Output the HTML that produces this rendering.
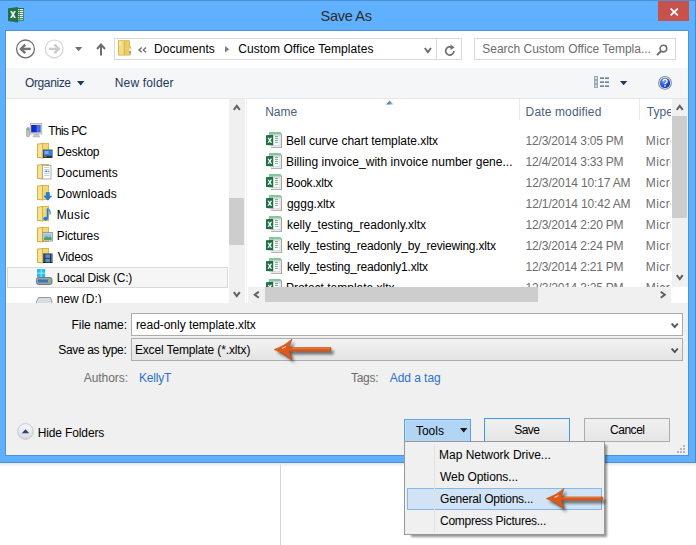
<!DOCTYPE html>
<html><head><meta charset="utf-8">
<style>
html,body{margin:0;padding:0;width:696px;height:545px;overflow:hidden;background:#fff;}
body{position:relative;font-family:"Liberation Sans",sans-serif;font-size:12px;color:#000;}
.a{position:absolute;}
.t{position:absolute;white-space:nowrap;}
.clip{position:absolute;overflow:hidden;}
</style></head><body>
<div class="a" style="left:280px;top:463px;width:1px;height:82px;background:#d4d4d4"></div>
<div class="a" style="left:0;top:463px;width:696px;height:4px;background:linear-gradient(#e6e6e6,rgba(255,255,255,0))"></div>

<!-- window frame -->
<div class="a" style="left:0;top:0;width:696px;height:463px;background:#5fb0fe"></div>
<div class="a" style="left:0;top:0;width:696px;height:1px;background:#4d8fd3"></div>
<div class="a" style="left:0;top:462px;width:696px;height:1px;background:#4d8fd3"></div>
<div class="a" style="left:695px;top:0;width:1px;height:463px;background:#4a8acb"></div>
<div class="a" style="left:5px;top:30px;width:684px;height:426px;background:#4f93d6"></div>
<div class="a" style="left:6px;top:31px;width:682px;height:424px;background:#f0f0f0"></div>

<!-- title bar -->
<svg class="a" style="left:8px;top:7px" width="16" height="16" viewBox="0 0 16 16">
  <rect x="9.8" y="1" width="6.2" height="12.6" fill="#1f7346"/>
  <rect x="10" y="2" width="5.2" height="10.6" fill="#fff"/>
  <rect x="10" y="3" width="5.2" height="0.8" fill="#1f7346"/>
  <rect x="10" y="5" width="5.2" height="0.8" fill="#1f7346"/>
  <rect x="10" y="7" width="5.2" height="0.8" fill="#1f7346"/>
  <rect x="10" y="9" width="5.2" height="0.8" fill="#1f7346"/>
  <rect x="10" y="11" width="5.2" height="0.8" fill="#1f7346"/>
  <rect x="11.3" y="2" width="0.6" height="10.6" fill="#1f7346"/>
  <path d="M0 1.2L10.2 0V15.5L0 14.1Z" fill="#1f7346"/>
  <path d="M2.1 4h1.9l1 2.1 1-2.1h1.9l-1.9 3.5 1.9 3.6H6l-1-2.2-1 2.2H2.1l1.9-3.6z" fill="#f4f4f4"/>
</svg>
<div class="t" style="left:320.55px;top:8.00px;font-size:14.5px;line-height:16px;letter-spacing:-0.292px;color:#2b2b2b;">Save As</div>
<div class="a" style="left:658px;top:1px;width:31px;height:20px;background:#c7514b"></div>
<svg class="a" style="left:669.7px;top:7.6px" width="9" height="8" viewBox="0 0 9 8"><path d="M0.6 0.5L7.8 7.4M7.8 0.5L0.6 7.4" stroke="#fff" stroke-width="1.75"/></svg>

<!-- nav bar -->
<div class="a" style="left:6px;top:31px;width:682px;height:37px;background:#fff"></div>
<svg class="a" style="left:15px;top:38px" width="21" height="21" viewBox="0 0 21 21">
  <circle cx="10.5" cy="10.9" r="8.9" fill="none" stroke="#6f6f6f" stroke-width="1.3"/>
  <path d="M6.5 10.9h9.3" stroke="#737373" stroke-width="2.4"/>
  <path d="M10.2 6.6L5.9 10.9 10.2 15.2" fill="none" stroke="#737373" stroke-width="2.4"/>
</svg>
<svg class="a" style="left:44px;top:38px" width="21" height="21" viewBox="0 0 21 21">
  <circle cx="10.2" cy="10.9" r="8.9" fill="none" stroke="#d4d4d4" stroke-width="1.2"/>
  <path d="M5 10.9h9.3" stroke="#cbcbcb" stroke-width="2.4"/>
  <path d="M10.5 6.6L14.8 10.9 10.5 15.2" fill="none" stroke="#cbcbcb" stroke-width="2.4"/>
</svg>
<svg class="a" style="left:75px;top:47px" width="8" height="5" viewBox="0 0 8 5"><path d="M0 0h7.2L3.6 4.3z" fill="#707070"/></svg>
<svg class="a" style="left:96px;top:42.5px" width="10" height="13" viewBox="0 0 10 13">
  <path d="M5 2V12.5" stroke="#6d6d6d" stroke-width="2"/>
  <path d="M1 6L5 1.6 9 6" fill="none" stroke="#6d6d6d" stroke-width="2"/>
</svg>
<div class="a" style="left:114px;top:38px;width:346px;height:20px;border:1px solid #d9d9d9;background:#fff"></div>
<div class="a" style="left:436px;top:39px;width:1px;height:20px;background:#d9d9d9"></div>
<svg class="a" style="left:118px;top:40px" width="14" height="16" viewBox="0 0 14 16">
  <rect x="0" y="0.3" width="12" height="15.2" rx="0.8" fill="#d6ad3c"/>
  <rect x="0.8" y="1" width="5" height="13.8" fill="#f4dc80"/>
  <rect x="1.5" y="1.5" width="1" height="4" fill="#fff8d8"/>
  <rect x="6.6" y="1" width="4.8" height="13.8" fill="#eacd6a"/>
  <rect x="11" y="6" width="2.2" height="9.2" fill="#e6c462"/>
  <rect x="11.5" y="8.5" width="1.2" height="3" fill="#fafafa"/>
  <rect x="11.5" y="11.3" width="1.2" height="2" fill="#3d8ee0"/>
</svg>
<svg class="a" style="left:137.5px;top:46.5px" width="9" height="6" viewBox="0 0 9 6"><path d="M3.7 0.5L1 2.9 3.7 5.3M8 0.5L5.3 2.9 8 5.3" fill="none" stroke="#6a6a6a" stroke-width="1.3"/></svg>
<svg class="a" style="left:225px;top:46px" width="5" height="7" viewBox="0 0 5 7"><path d="M0 0L4.3 3.3 0 6.6z" fill="#808080"/></svg>
<svg class="a" style="left:423.5px;top:46.5px" width="8" height="7" viewBox="0 0 8 7"><path d="M0.8 1L3.9 5 7 1" fill="none" stroke="#6d6d6d" stroke-width="2"/></svg>
<svg class="a" style="left:443.5px;top:42.5px" width="12" height="14" viewBox="0 0 12 14">
  <path d="M8.6 5A4.1 4.1 0 1 0 9.9 8" fill="none" stroke="#707070" stroke-width="1.7"/>
  <path d="M6.6 1.5L10.6 4.6 6.5 7z" fill="#707070"/>
</svg>
<div class="a" style="left:474px;top:38px;width:200px;height:20px;border:1px solid #d9d9d9;background:#fff"></div>
<svg class="a" style="left:655.5px;top:43.5px" width="12" height="12" viewBox="0 0 12 12">
  <circle cx="7.4" cy="4.6" r="3.3" fill="none" stroke="#6d6d6d" stroke-width="1.6"/>
  <path d="M5.1 7L1 11.1" stroke="#6d6d6d" stroke-width="2"/>
</svg>

<!-- toolbar -->
<div class="a" style="left:6px;top:68px;width:682px;height:30px;background:#f5f6f7"></div>
<div class="a" style="left:6px;top:98px;width:682px;height:1px;background:#e6e7e8"></div>
<svg class="a" style="left:77px;top:80.5px" width="8" height="5" viewBox="0 0 8 5"><path d="M0 0h7.4L3.7 4.4z" fill="#1e395b"/></svg>
<svg class="a" style="left:594px;top:76px" width="16" height="13" viewBox="0 0 16 13">
  <rect x="0.5" y="0.5" width="3" height="3" fill="#fff" stroke="#97a8bd" stroke-width="1"/>
  <rect x="0.5" y="4.5" width="3" height="3" fill="#fff" stroke="#97a8bd" stroke-width="1"/>
  <rect x="0.5" y="8.5" width="3" height="3" fill="#fff" stroke="#97a8bd" stroke-width="1"/>
  <rect x="1.5" y="1.5" width="1" height="1" fill="#3c9a4a"/>
  <rect x="1.5" y="5.5" width="1" height="1" fill="#e03b2b"/>
  <rect x="1.5" y="9.5" width="1" height="1" fill="#2f5fd0"/>
  <path d="M6 2.2h4M11 2.2h4M6 6.2h4M11 6.2h4M6 10.2h4M11 10.2h4" stroke="#4a5f7a" stroke-width="1.3"/>
</svg>
<svg class="a" style="left:620px;top:81px" width="8" height="5" viewBox="0 0 8 5"><path d="M0 0h7.3L3.65 4.2z" fill="#1e395b"/></svg>
<svg class="a" style="left:658px;top:76px" width="14" height="14" viewBox="0 0 14 14">
  <defs><radialGradient id="hg" cx="0.4" cy="0.3" r="0.75"><stop offset="0" stop-color="#7aa6f0"/><stop offset="0.55" stop-color="#2f5ed8"/><stop offset="1" stop-color="#0a1ea8"/></radialGradient></defs>
  <circle cx="7" cy="6.9" r="6.4" fill="#f4f6fa" stroke="#8f8f8f" stroke-width="1.1"/>
  <circle cx="7" cy="6.9" r="5.2" fill="url(#hg)"/>
  <path d="M5.2 5.2a1.9 1.9 0 1 1 2.5 1.8c-.5.3-.7.6-.7 1.3" fill="none" stroke="#fff" stroke-width="1.3"/>
  <rect x="6.3" y="9.3" width="1.4" height="1.4" fill="#fff"/>
</svg>

<!-- main area -->
<div class="a" style="left:6px;top:99px;width:682px;height:204px;background:#fff"></div>
<!-- nav scrollbar -->
<div class="a" style="left:229px;top:99px;width:16px;height:204px;background:#f0f0f0"></div>
<div class="a" style="left:229px;top:198px;width:15px;height:47px;background:#cdcdcd"></div>
<svg class="a" style="left:232.6px;top:104.4px" width="8" height="8" viewBox="0 0 8 8"><path d="M0.75 5.8L3.75 1.8 6.75 5.8" fill="none" stroke="#606060" stroke-width="2"/></svg>
<svg class="a" style="left:232.6px;top:291.3px" width="8" height="8" viewBox="0 0 8 8"><path d="M0.75 1.2L3.75 5.2 6.75 1.2" fill="none" stroke="#606060" stroke-width="2"/></svg>
<div class="a" style="left:246px;top:99px;width:1px;height:204px;background:#f3f3f3"></div>
<!-- nav pane -->
<div class="a" style="left:7px;top:267px;width:219px;height:19px;border:1px solid #dadada;background:#f6f6f6"></div>
<div class="clip" style="left:6px;top:99px;width:223px;height:204px">
<svg class="a" style="left:19.5px;top:23.5px" width="17" height="15" viewBox="0 0 17 15">
  <defs><linearGradient id="scr" x1="0" x2="1"><stop offset="0" stop-color="#0a20c8"/><stop offset="0.55" stop-color="#1a34d0"/><stop offset="0.62" stop-color="#4a78e0"/><stop offset="1" stop-color="#3a60d8"/></linearGradient></defs>
  <rect x="0.6" y="4.6" width="2.8" height="9.2" rx="1.2" fill="#c4c4c4" stroke="#8a8a8a" stroke-width="0.6"/>
  <rect x="1" y="5.6" width="2" height="1.6" fill="#40d040"/>
  <rect x="4.2" y="0.6" width="11.6" height="10.4" fill="#dcdcdc" stroke="#a8a8a8" stroke-width="0.7"/>
  <rect x="5.2" y="2" width="9.4" height="7.4" fill="url(#scr)"/>
  <path d="M8.5 11h4l0.6 1.6H7.9z" fill="#b0b0b0"/>
  <rect x="6.6" y="12.4" width="7.4" height="1.8" rx="0.6" fill="#bdbdbd"/>
</svg>
<div class="t" style="left:42.30px;top:25.00px;font-size:12px;line-height:14px;letter-spacing:-0.617px;">This PC</div>
<div class="t" style="left:50.80px;top:46.00px;font-size:12px;line-height:14px;letter-spacing:-0.217px;">Desktop</div>
<div class="t" style="left:50.80px;top:67.00px;font-size:12px;line-height:14px;letter-spacing:0.025px;">Documents</div>
<div class="t" style="left:50.80px;top:88.00px;font-size:12px;line-height:14px;letter-spacing:0.062px;">Downloads</div>
<div class="t" style="left:50.80px;top:109.00px;font-size:12px;line-height:14px;letter-spacing:0.325px;">Music</div>
<div class="t" style="left:50.80px;top:130.00px;font-size:12px;line-height:14px;letter-spacing:-0.143px;">Pictures</div>
<div class="t" style="left:51.80px;top:151.00px;font-size:12px;line-height:14px;letter-spacing:-0.240px;">Videos</div>
<div class="t" style="left:50.80px;top:172.00px;font-size:12px;line-height:14px;letter-spacing:-0.229px;">Local Disk (C:)</div>
<div class="t" style="left:50.80px;top:193.00px;font-size:12px;line-height:14px;letter-spacing:-0.071px;">new (D:)</div>
<svg class="a" style="left:31px;top:44px" width="16" height="16" viewBox="0 0 16 16"><rect x="5" y="0" width="7" height="15" fill="#d8b040"/><rect x="5.8" y="0.8" width="5.4" height="13.4" fill="#f0d878"/><path d="M0 0.8L6 0V15.4L0 14.8z" fill="#cfa63a"/><path d="M0.8 1.4L5.2 0.9V14.5L0.8 14.1z" fill="#f6e291"/><rect x="6" y="6.6" width="9.5" height="8.4" fill="#2f2f2f"/><rect x="6.6" y="7.2" width="8.3" height="5.6" fill="#3a7ee0"/><rect x="7.5" y="8" width="4" height="3" fill="#6fb0f0"/><rect x="6.8" y="13" width="1.2" height="1.4" fill="#e04020"/><rect x="8.2" y="13" width="1.2" height="1.4" fill="#40b040"/></svg>
<svg class="a" style="left:31px;top:65px" width="16" height="16" viewBox="0 0 16 16"><rect x="5" y="0" width="7" height="15" fill="#d8b040"/><rect x="5.8" y="0.8" width="5.4" height="13.4" fill="#f0d878"/><path d="M0 0.8L6 0V15.4L0 14.8z" fill="#cfa63a"/><path d="M0.8 1.4L5.2 0.9V14.5L0.8 14.1z" fill="#f6e291"/><rect x="5.6" y="1.3" width="8.4" height="13.7" fill="#fff" stroke="#9a9a9a" stroke-width="0.8"/><path d="M7 3.5h5.5M7 5.5h5.5M7 7.5h5.5M7 9.5h5.5M7 11.5h5.5" stroke="#b8c4d0" stroke-width="0.8"/><rect x="8.5" y="6.5" width="1.6" height="1.6" fill="#2080e8"/><rect x="11" y="6.8" width="1.2" height="1.2" fill="#30a0f0"/></svg>
<svg class="a" style="left:31px;top:86px" width="16" height="16" viewBox="0 0 16 16"><rect x="5" y="0" width="7" height="15" fill="#d8b040"/><rect x="5.8" y="0.8" width="5.4" height="13.4" fill="#f0d878"/><path d="M0 0.8L6 0V15.4L0 14.8z" fill="#cfa63a"/><path d="M0.8 1.4L5.2 0.9V14.5L0.8 14.1z" fill="#f6e291"/><path d="M9.2 7.5h3.2v3.5h2.3l-3.9 4.2-3.9-4.2h2.3z" fill="#1f7ee0" stroke="#0d5cb0" stroke-width="0.5"/></svg>
<svg class="a" style="left:31px;top:107px" width="16" height="16" viewBox="0 0 16 16"><rect x="5" y="0" width="7" height="15" fill="#d8b040"/><rect x="5.8" y="0.8" width="5.4" height="13.4" fill="#f0d878"/><path d="M0 0.8L6 0V15.4L0 14.8z" fill="#cfa63a"/><path d="M0.8 1.4L5.2 0.9V14.5L0.8 14.1z" fill="#f6e291"/><path d="M10.5 2.5v10" stroke="#1f7ee0" stroke-width="1.6"/><ellipse cx="8.6" cy="12.6" rx="2.4" ry="1.9" fill="#1f7ee0"/><path d="M10.5 2.5q3.5 2 2.5 6" fill="none" stroke="#3a9af0" stroke-width="1.4"/></svg>
<svg class="a" style="left:31px;top:128px" width="16" height="16" viewBox="0 0 16 16"><rect x="5" y="0" width="7" height="15" fill="#d8b040"/><rect x="5.8" y="0.8" width="5.4" height="13.4" fill="#f0d878"/><path d="M0 0.8L6 0V15.4L0 14.8z" fill="#cfa63a"/><path d="M0.8 1.4L5.2 0.9V14.5L0.8 14.1z" fill="#f6e291"/><rect x="6" y="5.5" width="9.5" height="8.5" fill="#e8e8e8" stroke="#8a8a8a" stroke-width="0.8"/><rect x="7" y="6.5" width="7.5" height="6.5" fill="#8ec8ee"/><path d="M7 11l2.5-2 2 1.5 1.5-1 1.5 1v2.5H7z" fill="#5aa060"/></svg>
<svg class="a" style="left:31px;top:149px" width="16" height="16" viewBox="0 0 16 16"><rect x="5" y="0" width="7" height="15" fill="#d8b040"/><rect x="5.8" y="0.8" width="5.4" height="13.4" fill="#f0d878"/><path d="M0 0.8L6 0V15.4L0 14.8z" fill="#cfa63a"/><path d="M0.8 1.4L5.2 0.9V14.5L0.8 14.1z" fill="#f6e291"/><rect x="6" y="5.5" width="9.5" height="9.5" fill="#222"/><rect x="8.3" y="6.3" width="4.9" height="3.6" fill="#4a8fd8"/><rect x="8.3" y="10.6" width="4.9" height="3.6" fill="#4a8fd8"/><path d="M6.9 6.5v8M14.6 6.5v8" stroke="#ddd" stroke-width="0.9" stroke-dasharray="1 1"/></svg>
<svg class="a" style="left:30px;top:170px" width="17" height="17" viewBox="0 0 17 17">
  <rect x="1" y="0" width="3.8" height="3.8" fill="#1ec0f0"/><rect x="5.4" y="0" width="3.8" height="3.8" fill="#1ec0f0"/>
  <rect x="1" y="4.4" width="3.8" height="3.8" fill="#1ec0f0"/><rect x="5.4" y="4.4" width="3.8" height="3.8" fill="#1ec0f0"/>
  <rect x="0.5" y="8.5" width="15.5" height="7" rx="2" fill="#9aa2aa" stroke="#5d646c" stroke-width="0.8"/>
  <rect x="2" y="10.5" width="11" height="3" fill="#3c72b8"/>
  <rect x="12" y="10.5" width="1.5" height="3" fill="#58d858"/>
</svg>
<svg class="a" style="left:30px;top:193.5px" width="17" height="17" viewBox="0 0 17 17">
  <path d="M2.5 4.5h12l1.5 4v7H0.5v-7z" fill="#d8dcdf" stroke="#7d848a" stroke-width="0.8"/>
  <rect x="2" y="10.5" width="11" height="3" fill="#fff" stroke="#8a9096" stroke-width="0.5"/>
  <rect x="12" y="10.5" width="1.5" height="3" fill="#58d858"/>
</svg>
</div>

<!-- file list -->
<svg class="a" style="left:385.5px;top:99.5px" width="8" height="5" viewBox="0 0 8 5"><defs><linearGradient id="sg" x1="0" x2="1"><stop offset="0" stop-color="#3a5a80"/><stop offset="1" stop-color="#9bd0f0"/></linearGradient></defs><path d="M0 4.5L3.75 0.5 7.5 4.5z" fill="url(#sg)"/></svg>
<div class="a" style="left:519px;top:99px;width:1px;height:21px;background:#e3ebf3"></div>
<div class="a" style="left:639px;top:99px;width:1px;height:21px;background:#e3ebf3"></div>
<div class="clip" style="left:246px;top:99px;width:425px;height:188px">
<div class="t" style="left:19.20px;top:6.00px;font-size:12px;line-height:14px;letter-spacing:-0.033px;color:#4c607a;">Name</div>
<div class="t" style="left:279.60px;top:6.00px;font-size:12px;line-height:14px;letter-spacing:0.142px;color:#4c607a;">Date modified</div>
<div class="t" style="left:400.80px;top:6.00px;font-size:12px;line-height:14px;color:#4c607a;">Type</div>
<div class="t" style="left:39.90px;top:35.00px;font-size:12px;line-height:14px;letter-spacing:-0.041px;">Bell curve chart template.xltx</div>
<div class="t" style="left:279.60px;top:35.00px;font-size:12px;line-height:14px;letter-spacing:-0.213px;color:#6d6d6d;">12/3/2014 3:05 PM</div>
<div class="t" style="left:399.80px;top:35.00px;font-size:12px;line-height:14px;letter-spacing:0.450px;color:#6d6d6d;">Microsoft</div>
<div class="t" style="left:39.90px;top:56.00px;font-size:12px;line-height:14px;letter-spacing:0.029px;">Billing invoice_with invoice number gene...</div>
<div class="t" style="left:279.60px;top:56.00px;font-size:12px;line-height:14px;letter-spacing:-0.213px;color:#6d6d6d;">12/4/2014 3:33 PM</div>
<div class="t" style="left:399.80px;top:56.00px;font-size:12px;line-height:14px;letter-spacing:0.450px;color:#6d6d6d;">Microsoft</div>
<div class="t" style="left:39.90px;top:77.00px;font-size:12px;line-height:14px;letter-spacing:-0.213px;">Book.xltx</div>
<div class="t" style="left:279.60px;top:77.00px;font-size:12px;line-height:14px;letter-spacing:-0.141px;color:#6d6d6d;">12/3/2014 10:17 AM</div>
<div class="t" style="left:399.80px;top:77.00px;font-size:12px;line-height:14px;letter-spacing:0.450px;color:#6d6d6d;">Microsoft</div>
<div class="t" style="left:40.90px;top:98.00px;font-size:12px;line-height:14px;">gggg.xltx</div>
<div class="t" style="left:279.60px;top:98.00px;font-size:12px;line-height:14px;letter-spacing:-0.141px;color:#6d6d6d;">12/1/2014 10:42 AM</div>
<div class="t" style="left:399.80px;top:98.00px;font-size:12px;line-height:14px;letter-spacing:0.450px;color:#6d6d6d;">Microsoft</div>
<div class="t" style="left:40.90px;top:119.00px;font-size:12px;line-height:14px;">kelly_testing_readonly.xltx</div>
<div class="t" style="left:279.60px;top:119.00px;font-size:12px;line-height:14px;letter-spacing:-0.213px;color:#6d6d6d;">12/3/2014 2:20 PM</div>
<div class="t" style="left:399.80px;top:119.00px;font-size:12px;line-height:14px;letter-spacing:0.450px;color:#6d6d6d;">Microsoft</div>
<div class="t" style="left:40.90px;top:140.00px;font-size:12px;line-height:14px;letter-spacing:-0.200px;">kelly_testing_readonly_by_reviewing.xltx</div>
<div class="t" style="left:279.60px;top:140.00px;font-size:12px;line-height:14px;letter-spacing:-0.213px;color:#6d6d6d;">12/3/2014 2:24 PM</div>
<div class="t" style="left:399.80px;top:140.00px;font-size:12px;line-height:14px;letter-spacing:0.450px;color:#6d6d6d;">Microsoft</div>
<div class="t" style="left:40.90px;top:161.00px;font-size:12px;line-height:14px;letter-spacing:-0.207px;">kelly_testing_readonly1.xltx</div>
<div class="t" style="left:279.60px;top:161.00px;font-size:12px;line-height:14px;letter-spacing:-0.213px;color:#6d6d6d;">12/3/2014 2:21 PM</div>
<div class="t" style="left:399.80px;top:161.00px;font-size:12px;line-height:14px;letter-spacing:0.450px;color:#6d6d6d;">Microsoft</div>
<div class="t" style="left:39.90px;top:182.00px;font-size:12px;line-height:14px;">Protect template.xltx</div>
<div class="t" style="left:279.60px;top:182.00px;font-size:12px;line-height:14px;letter-spacing:-0.213px;color:#6d6d6d;">12/3/2014 3:25 PM</div>
<div class="t" style="left:399.80px;top:182.00px;font-size:12px;line-height:14px;letter-spacing:0.450px;color:#6d6d6d;">Microsoft</div>
<svg class="a" style="left:20px;top:33px" width="16" height="16" viewBox="0 0 16 16"><path d="M3 0h11.3l1.7 1.7V3H3z" fill="#84c6a0"/><rect x="14.8" y="2.5" width="1.2" height="13.3" fill="#a3a3a3"/><rect x="5" y="14.6" width="11" height="1.2" fill="#a3a3a3"/><rect x="4" y="2.6" width="10.8" height="12" fill="#fff"/><rect x="7.6" y="3.2" width="6.4" height="10.6" fill="#fff" stroke="#c4c4c4" stroke-width="0.7"/><path d="M9 4.7h3.2" stroke="#7a7a7a" stroke-width="0.9"/><path d="M9 6.6h3.2M9 8.5h3.2M9 10.4h3.2" stroke="#62b283" stroke-width="0.9"/><path d="M0 3.3L7 2.8V13.5L0 12.9Z" fill="#1e7145"/><path d="M1.5 5.8h1.5l.8 1.5.8-1.5h1.5l-1.5 2.4 1.5 2.5H4.6l-.8-1.5-.8 1.5H1.5l1.5-2.5z" fill="#fff"/></svg>
<svg class="a" style="left:20px;top:54px" width="16" height="16" viewBox="0 0 16 16"><path d="M3 0h11.3l1.7 1.7V3H3z" fill="#84c6a0"/><rect x="14.8" y="2.5" width="1.2" height="13.3" fill="#a3a3a3"/><rect x="5" y="14.6" width="11" height="1.2" fill="#a3a3a3"/><rect x="4" y="2.6" width="10.8" height="12" fill="#fff"/><rect x="7.6" y="3.2" width="6.4" height="10.6" fill="#fff" stroke="#c4c4c4" stroke-width="0.7"/><path d="M9 4.7h3.2" stroke="#7a7a7a" stroke-width="0.9"/><path d="M9 6.6h3.2M9 8.5h3.2M9 10.4h3.2" stroke="#62b283" stroke-width="0.9"/><path d="M0 3.3L7 2.8V13.5L0 12.9Z" fill="#1e7145"/><path d="M1.5 5.8h1.5l.8 1.5.8-1.5h1.5l-1.5 2.4 1.5 2.5H4.6l-.8-1.5-.8 1.5H1.5l1.5-2.5z" fill="#fff"/></svg>
<svg class="a" style="left:20px;top:75px" width="16" height="16" viewBox="0 0 16 16"><path d="M3 0h11.3l1.7 1.7V3H3z" fill="#84c6a0"/><rect x="14.8" y="2.5" width="1.2" height="13.3" fill="#a3a3a3"/><rect x="5" y="14.6" width="11" height="1.2" fill="#a3a3a3"/><rect x="4" y="2.6" width="10.8" height="12" fill="#fff"/><rect x="7.6" y="3.2" width="6.4" height="10.6" fill="#fff" stroke="#c4c4c4" stroke-width="0.7"/><path d="M9 4.7h3.2" stroke="#7a7a7a" stroke-width="0.9"/><path d="M9 6.6h3.2M9 8.5h3.2M9 10.4h3.2" stroke="#62b283" stroke-width="0.9"/><path d="M0 3.3L7 2.8V13.5L0 12.9Z" fill="#1e7145"/><path d="M1.5 5.8h1.5l.8 1.5.8-1.5h1.5l-1.5 2.4 1.5 2.5H4.6l-.8-1.5-.8 1.5H1.5l1.5-2.5z" fill="#fff"/></svg>
<svg class="a" style="left:20px;top:96px" width="16" height="16" viewBox="0 0 16 16"><path d="M3 0h11.3l1.7 1.7V3H3z" fill="#84c6a0"/><rect x="14.8" y="2.5" width="1.2" height="13.3" fill="#a3a3a3"/><rect x="5" y="14.6" width="11" height="1.2" fill="#a3a3a3"/><rect x="4" y="2.6" width="10.8" height="12" fill="#fff"/><rect x="7.6" y="3.2" width="6.4" height="10.6" fill="#fff" stroke="#c4c4c4" stroke-width="0.7"/><path d="M9 4.7h3.2" stroke="#7a7a7a" stroke-width="0.9"/><path d="M9 6.6h3.2M9 8.5h3.2M9 10.4h3.2" stroke="#62b283" stroke-width="0.9"/><path d="M0 3.3L7 2.8V13.5L0 12.9Z" fill="#1e7145"/><path d="M1.5 5.8h1.5l.8 1.5.8-1.5h1.5l-1.5 2.4 1.5 2.5H4.6l-.8-1.5-.8 1.5H1.5l1.5-2.5z" fill="#fff"/></svg>
<svg class="a" style="left:20px;top:117px" width="16" height="16" viewBox="0 0 16 16"><path d="M3 0h11.3l1.7 1.7V3H3z" fill="#84c6a0"/><rect x="14.8" y="2.5" width="1.2" height="13.3" fill="#a3a3a3"/><rect x="5" y="14.6" width="11" height="1.2" fill="#a3a3a3"/><rect x="4" y="2.6" width="10.8" height="12" fill="#fff"/><rect x="7.6" y="3.2" width="6.4" height="10.6" fill="#fff" stroke="#c4c4c4" stroke-width="0.7"/><path d="M9 4.7h3.2" stroke="#7a7a7a" stroke-width="0.9"/><path d="M9 6.6h3.2M9 8.5h3.2M9 10.4h3.2" stroke="#62b283" stroke-width="0.9"/><path d="M0 3.3L7 2.8V13.5L0 12.9Z" fill="#1e7145"/><path d="M1.5 5.8h1.5l.8 1.5.8-1.5h1.5l-1.5 2.4 1.5 2.5H4.6l-.8-1.5-.8 1.5H1.5l1.5-2.5z" fill="#fff"/></svg>
<svg class="a" style="left:20px;top:138px" width="16" height="16" viewBox="0 0 16 16"><path d="M3 0h11.3l1.7 1.7V3H3z" fill="#84c6a0"/><rect x="14.8" y="2.5" width="1.2" height="13.3" fill="#a3a3a3"/><rect x="5" y="14.6" width="11" height="1.2" fill="#a3a3a3"/><rect x="4" y="2.6" width="10.8" height="12" fill="#fff"/><rect x="7.6" y="3.2" width="6.4" height="10.6" fill="#fff" stroke="#c4c4c4" stroke-width="0.7"/><path d="M9 4.7h3.2" stroke="#7a7a7a" stroke-width="0.9"/><path d="M9 6.6h3.2M9 8.5h3.2M9 10.4h3.2" stroke="#62b283" stroke-width="0.9"/><path d="M0 3.3L7 2.8V13.5L0 12.9Z" fill="#1e7145"/><path d="M1.5 5.8h1.5l.8 1.5.8-1.5h1.5l-1.5 2.4 1.5 2.5H4.6l-.8-1.5-.8 1.5H1.5l1.5-2.5z" fill="#fff"/></svg>
<svg class="a" style="left:20px;top:159px" width="16" height="16" viewBox="0 0 16 16"><path d="M3 0h11.3l1.7 1.7V3H3z" fill="#84c6a0"/><rect x="14.8" y="2.5" width="1.2" height="13.3" fill="#a3a3a3"/><rect x="5" y="14.6" width="11" height="1.2" fill="#a3a3a3"/><rect x="4" y="2.6" width="10.8" height="12" fill="#fff"/><rect x="7.6" y="3.2" width="6.4" height="10.6" fill="#fff" stroke="#c4c4c4" stroke-width="0.7"/><path d="M9 4.7h3.2" stroke="#7a7a7a" stroke-width="0.9"/><path d="M9 6.6h3.2M9 8.5h3.2M9 10.4h3.2" stroke="#62b283" stroke-width="0.9"/><path d="M0 3.3L7 2.8V13.5L0 12.9Z" fill="#1e7145"/><path d="M1.5 5.8h1.5l.8 1.5.8-1.5h1.5l-1.5 2.4 1.5 2.5H4.6l-.8-1.5-.8 1.5H1.5l1.5-2.5z" fill="#fff"/></svg>
<svg class="a" style="left:20px;top:180px" width="16" height="16" viewBox="0 0 16 16"><path d="M3 0h11.3l1.7 1.7V3H3z" fill="#84c6a0"/><rect x="14.8" y="2.5" width="1.2" height="13.3" fill="#a3a3a3"/><rect x="5" y="14.6" width="11" height="1.2" fill="#a3a3a3"/><rect x="4" y="2.6" width="10.8" height="12" fill="#fff"/><rect x="7.6" y="3.2" width="6.4" height="10.6" fill="#fff" stroke="#c4c4c4" stroke-width="0.7"/><path d="M9 4.7h3.2" stroke="#7a7a7a" stroke-width="0.9"/><path d="M9 6.6h3.2M9 8.5h3.2M9 10.4h3.2" stroke="#62b283" stroke-width="0.9"/><path d="M0 3.3L7 2.8V13.5L0 12.9Z" fill="#1e7145"/><path d="M1.5 5.8h1.5l.8 1.5.8-1.5h1.5l-1.5 2.4 1.5 2.5H4.6l-.8-1.5-.8 1.5H1.5l1.5-2.5z" fill="#fff"/></svg>
</div>
<!-- scrollbars -->
<div class="a" style="left:672px;top:99px;width:16px;height:188px;background:#f0f0f0"></div>
<div class="a" style="left:672px;top:116px;width:15px;height:102px;background:#cdcdcd"></div>
<svg class="a" style="left:675.8px;top:104.4px" width="8" height="8" viewBox="0 0 8 8"><path d="M0.75 5.8L3.75 1.8 6.75 5.8" fill="none" stroke="#606060" stroke-width="2"/></svg>
<svg class="a" style="left:675.8px;top:274.3px" width="8" height="8" viewBox="0 0 8 8"><path d="M0.75 1.2L3.75 5.2 6.75 1.2" fill="none" stroke="#606060" stroke-width="2"/></svg>
<div class="a" style="left:248px;top:287px;width:423px;height:16px;background:#f0f0f0"></div>
<div class="a" style="left:265px;top:287px;width:273px;height:15px;background:#cdcdcd"></div>
<svg class="a" style="left:252.9px;top:291px" width="8" height="8" viewBox="0 0 8 8"><path d="M5.8 0.75L1.8 3.75 5.8 6.75" fill="none" stroke="#606060" stroke-width="2"/></svg>
<svg class="a" style="left:659.8px;top:291px" width="8" height="8" viewBox="0 0 8 8"><path d="M0.75 0.75L4.75 3.75 0.75 6.75" fill="none" stroke="#606060" stroke-width="2"/></svg>

<!-- bottom form -->
<div class="a" style="left:131px;top:313px;width:550px;height:21px;border:1px solid #acacac;background:#fff"></div>
<svg class="a" style="left:671px;top:321.5px" width="8" height="7" viewBox="0 0 8 7"><path d="M0.7 1.5L3.75 5 6.8 1.5" fill="none" stroke="#505050" stroke-width="1.9"/></svg>
<div class="a" style="left:131px;top:338px;width:550px;height:21px;border:1px solid #acacac;background:linear-gradient(#f2f2f2,#e4e4e4)"></div>
<svg class="a" style="left:671px;top:346.5px" width="8" height="7" viewBox="0 0 8 7"><path d="M0.7 1.5L3.75 5 6.8 1.5" fill="none" stroke="#505050" stroke-width="1.9"/></svg>
<svg class="a" style="left:17px;top:422.5px" width="17" height="17" viewBox="0 0 17 17">
  <defs><linearGradient id="hf" x1="0" y1="0" x2="0" y2="1"><stop offset="0" stop-color="#fbfbfb"/><stop offset="1" stop-color="#d8d8d8"/></linearGradient></defs>
  <circle cx="8.5" cy="8.5" r="7.8" fill="url(#hf)" stroke="#b4c0d2" stroke-width="0.9"/>
  <path d="M4.8 10.3L8.5 6.3 12.2 10.3z" fill="#1f3f8f"/>
</svg>
<div class="a" style="left:404px;top:419px;width:65px;height:21px;border:1px solid #5fa2e0;background:#b3d5f5;box-shadow:inset 1px 1px 0 #c2def8"></div>
<svg class="a" style="left:459.5px;top:427.5px" width="8" height="5" viewBox="0 0 8 5"><path d="M0 0h7.4L3.7 4.6z" fill="#1b1b1b"/></svg>
<div class="a" style="left:484px;top:418px;width:84px;height:22px;border:1px solid #3c9bf0;background:linear-gradient(#f0f0f0,#e5e5e5)"></div>
<div class="a" style="left:584px;top:418px;width:84px;height:22px;border:1px solid #acacac;background:linear-gradient(#f0f0f0,#e5e5e5)"></div>
<svg class="a" style="left:677px;top:445px" width="9" height="9" viewBox="0 0 9 9">
  <rect x="6" y="0" width="2" height="2" fill="#b8b8b8"/>
  <rect x="3" y="3" width="2" height="2" fill="#b8b8b8"/><rect x="6" y="3" width="2" height="2" fill="#b8b8b8"/>
  <rect x="0" y="6" width="2" height="2" fill="#b8b8b8"/><rect x="3" y="6" width="2" height="2" fill="#b8b8b8"/><rect x="6" y="6" width="2" height="2" fill="#b8b8b8"/>
</svg>
<div class="t" style="left:71.55px;top:318.00px;font-size:12px;line-height:14px;letter-spacing:-0.067px;">File name:</div>
<div class="t" style="left:58.30px;top:343.00px;font-size:12px;line-height:14px;letter-spacing:-0.358px;">Save as type:</div>
<div class="t" style="left:135.90px;top:318.00px;font-size:12px;line-height:14px;letter-spacing:-0.036px;">read-only template.xltx</div>
<div class="t" style="left:134.90px;top:343.00px;font-size:12px;line-height:14px;letter-spacing:-0.136px;">Excel Template (*.xltx)</div>
<div class="t" style="left:83.80px;top:371.00px;font-size:12px;line-height:14px;letter-spacing:-0.071px;color:#6d6d6d;">Authors:</div>
<div class="t" style="left:139.00px;top:371.00px;font-size:12px;line-height:14px;letter-spacing:-0.200px;color:#2c70cc;">KellyT</div>
<div class="t" style="left:351.10px;top:371.00px;font-size:12px;line-height:14px;letter-spacing:-0.325px;color:#6d6d6d;">Tags:</div>
<div class="t" style="left:389.80px;top:371.00px;font-size:12px;line-height:14px;letter-spacing:-0.062px;color:#2c70cc;">Add a tag</div>
<div class="t" style="left:37.70px;top:426.00px;font-size:12px;line-height:14px;letter-spacing:-0.127px;">Hide Folders</div>
<div class="t" style="left:415.90px;top:424.00px;font-size:12px;line-height:14px;letter-spacing:0.025px;">Tools</div>
<div class="t" style="left:514.30px;top:423.00px;font-size:12px;line-height:14px;letter-spacing:-0.600px;">Save</div>
<div class="t" style="left:610.05px;top:423.00px;font-size:12px;line-height:14px;letter-spacing:-0.480px;">Cancel</div>
<div class="t" style="left:154.05px;top:42.00px;font-size:12px;line-height:14px;">Documents</div>
<div class="t" style="left:238.30px;top:42.00px;font-size:12px;line-height:14px;letter-spacing:0.068px;">Custom Office Templates</div>
<div class="t" style="left:482.30px;top:42.00px;font-size:12px;line-height:14px;letter-spacing:-0.014px;color:#6d6d6d;">Search Custom Office Templa...</div>
<div class="t" style="left:25.05px;top:76.00px;font-size:12px;line-height:14px;letter-spacing:-0.393px;color:#1e395b;">Organize</div>
<div class="t" style="left:114.80px;top:76.00px;font-size:12px;line-height:14px;letter-spacing:0.156px;color:#1e395b;">New folder</div>

<!-- menu -->
<div class="a" style="left:411px;top:445px;width:196px;height:92px;background:rgba(0,0,0,0.42);filter:blur(1.3px)"></div>
<div class="a" style="left:404px;top:441px;width:199px;height:92px;border:1px solid #979797;background:#f0f0f0"></div>
<div class="a" style="left:407px;top:488px;width:193px;height:20px;border:1px solid #84b7ea;background:#d1e3f5"></div>
<div class="a" style="left:434px;top:444px;width:1px;height:88px;background:#e0e0e0"></div>
<div class="t" style="left:439.05px;top:448.00px;font-size:12px;line-height:14px;letter-spacing:-0.013px;">Map Network Drive...</div>
<div class="t" style="left:440.05px;top:470.00px;font-size:12px;line-height:14px;letter-spacing:-0.088px;">Web Options...</div>
<div class="t" style="left:440.05px;top:492.00px;font-size:12px;line-height:14px;letter-spacing:-0.238px;">General Options...</div>
<div class="t" style="left:440.05px;top:514.00px;font-size:12px;line-height:14px;letter-spacing:-0.271px;">Compress Pictures...</div>

<!-- arrows -->
<svg class="a" style="left:0;top:0" width="696" height="545" viewBox="0 0 696 545">
  <defs><filter id="sh" x="-20%" y="-50%" width="140%" height="200%"><feGaussianBlur stdDeviation="1.5"/></filter></defs>
  <g transform="translate(2.5,3)" opacity="0.6" filter="url(#sh)">
    <path d="M274.2 349.6Q284.1 346.2 292.0 339.2L289.2 347.6H331.0V351.2H289.2L292.0 360.2Q284.1 353.1 274.2 349.6Z" fill="#000"/>
    <path d="M546.3 498.6Q556.1 495.4 564.0 488.6L561.2 496.9H602.8V500.3H561.2L564.0 509.2Q556.1 502.1 546.3 498.6Z" fill="#000"/>
  </g>
  <path d="M274.2 349.6Q284.1 346.2 292.0 339.2L289.2 347.6H331.0V351.2H289.2L292.0 360.2Q284.1 353.1 274.2 349.6Z" fill="#dc5a1a" stroke="#b84a12" stroke-width="0.6"/>
  <path d="M546.3 498.6Q556.1 495.4 564.0 488.6L561.2 496.9H602.8V500.3H561.2L564.0 509.2Q556.1 502.1 546.3 498.6Z" fill="#dc5a1a" stroke="#b84a12" stroke-width="0.6"/>
  <path d="M292 348.3H330" stroke="#f0905a" stroke-width="0.8" opacity="0.8"/>
  <path d="M564 497.6H601" stroke="#f0905a" stroke-width="0.8" opacity="0.8"/>
  <path d="M282 348.5L286 346.5" stroke="#f5c8a8" stroke-width="1.1"/>
  <path d="M554.5 497.5L558.5 495.5" stroke="#f5c8a8" stroke-width="1.1"/>
</svg>
</body></html>
